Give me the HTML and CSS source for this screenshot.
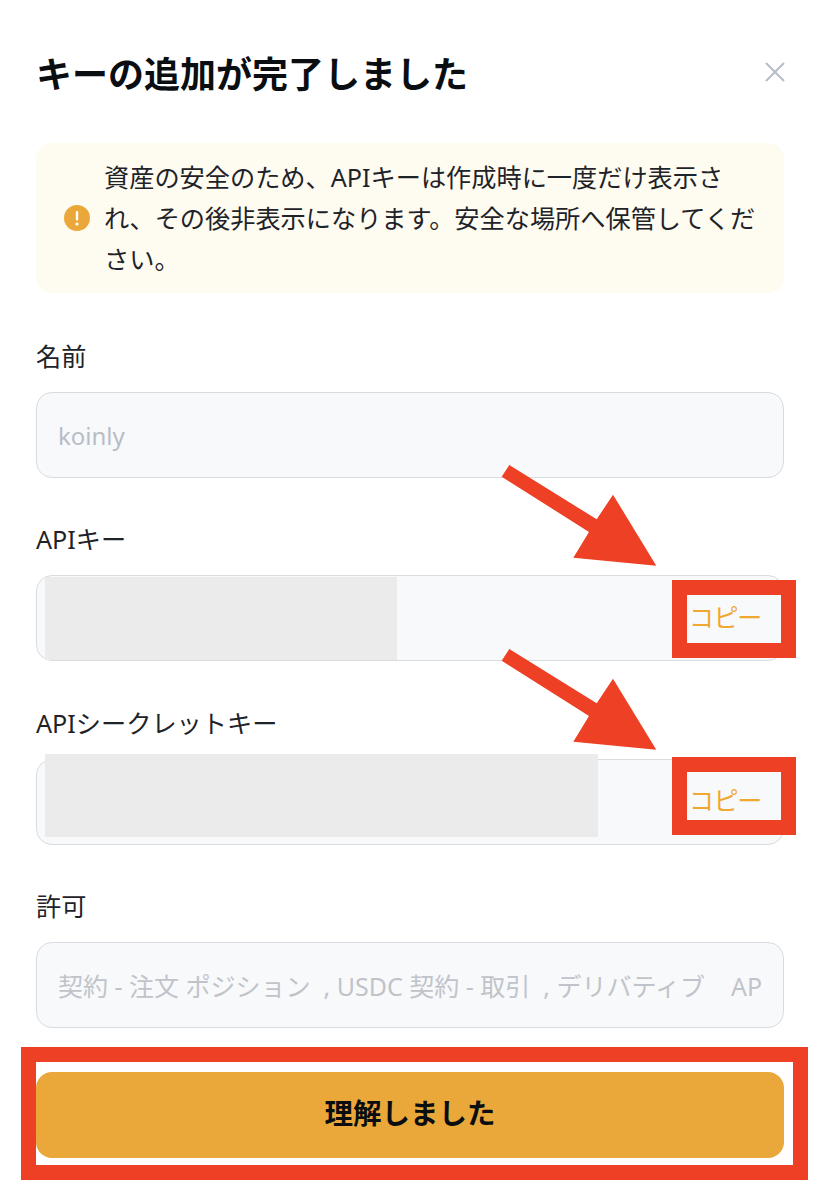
FILE: index.html
```html
<!DOCTYPE html>
<html lang="ja">
<head>
<meta charset="utf-8">
<title>キーの追加が完了しました</title>
<link rel="stylesheet" href="styles.css">
</head>
<body>
<main class="modal">
  <header class="head">
    <h1 class="title">キーの追加が完了しました</h1>
    <svg class="close" viewBox="0 0 20 20" width="20" height="20" aria-hidden="true"><path d="M1 1 L19 19 M19 1 L1 19"/></svg>
  </header>
  <section class="notice">
    <svg class="notice-icon" viewBox="0 0 26 26" width="26" height="26" aria-hidden="true"><circle cx="13" cy="13" r="13" fill="#eba83a"/><rect x="11.8" y="6" width="2.4" height="9.5" rx="1" fill="#fff"/><circle cx="13" cy="19" r="1.6" fill="#fff"/></svg>
    <p class="notice-text">資産の安全のため、APIキーは作成時に一度だけ表示され、その後非表示になります。安全な場所へ保管してください。</p>
  </section>
  <div class="field first">
    <label class="label">名前</label>
    <div class="box"><span class="value latin">koinly</span></div>
  </div>
  <div class="field">
    <label class="label">APIキー</label>
    <div class="box"><span class="value"></span><span class="copy">コピー</span></div>
  </div>
  <div class="field">
    <label class="label">APIシークレットキー</label>
    <div class="box"><span class="value"></span><span class="copy">コピー</span></div>
  </div>
  <div class="field">
    <label class="label">許可</label>
    <div class="box"><span class="value perms">契約 - 注文 ポジション&nbsp; , USDC 契約 - 取引&nbsp; , デリバティブ&nbsp; &nbsp; API</span></div>
  </div>
  <button class="confirm" type="button">理解しました</button>
</main>

<div class="mask mask-key"></div>
<div class="mask mask-secret"></div>
<div class="frame frame-key"></div>
<div class="frame frame-secret"></div>
<div class="frame frame-button"></div>
<svg class="arrows" viewBox="0 0 834 1190" width="834" height="1190" aria-hidden="true">
  <polygon points="501.7,476.7 509.3,465 596.7,519.3 613,494.7 656.3,565.7 573.3,557.7 589,532"/>
  <polygon points="501.7,660.7 509.3,649 596.7,703.3 613,678.7 656.3,749.7 573.3,741.7 589,716"/>
</svg>
</body>
</html>
```
FILE: styles.css
```css
* { box-sizing: border-box; }
html, body { margin: 0; padding: 0; background: #fff; }
body {
  position: relative;
  width: 834px;
  height: 1190px;
  overflow: hidden;
  font-family: "Noto Sans", "Noto Sans CJK JP", sans-serif;
  color: #1e2329;
}
.modal { display: flex; flex-direction: column; padding: 47px 50px 0 36px; }
.head { display: flex; justify-content: space-between; align-items: flex-start; height: 50px; margin-bottom: 46px; }
.title { margin: 0; font-size: 36px; line-height: 50px; font-weight: 700; color: #0b0e11; font-family: "Noto Sans CJK JP", sans-serif; }
.close { margin-top: 15px; margin-right: -1px; fill: none; stroke: #b7bdc6; stroke-width: 2; }
.notice {
  display: flex;
  align-items: center;
  gap: 14px;
  height: 150px;
  padding: 0 24px 0 28px;
  background: #fefbf0;
  border-radius: 16px;
}
.notice-icon { flex: none; }
.notice-text { margin: 0; font-size: 25.2px; line-height: 41px; color: #1e2329; }
.field { margin-top: 44.4px; }
.field.first { margin-top: 46px; }
.label { display: block; font-size: 25.2px; line-height: 35px; margin-bottom: 18px; color: #1e2329; }
.box {
  display: flex;
  align-items: center;
  justify-content: space-between;
  height: 86px;
  padding: 0 21px;
  background: #f8f9fb;
  border: 1px solid #d8dce1;
  border-radius: 16px;
  font-size: 25px;
  overflow: hidden;
}
.value { color: #b7bdc6; white-space: nowrap; overflow: hidden; flex: 1; min-width: 0; }
.latin { font-size: 24px; }
.perms { color: #c0c4ca; }
.copy { color: #f0a830; white-space: nowrap; flex: none; font-feature-settings: "palt" 1; padding-bottom: 5px; }
.confirm {
  margin-top: 43.8px;
  height: 86px;
  padding: 0 0 5px;
  border: 0;
  border-radius: 16px;
  background: #eba83a;
  color: #0b0e11;
  font: 700 28.5px/40px "Noto Sans CJK JP", sans-serif;
}
.mask { position: absolute; left: 45px; background: #ebebeb; }
.mask-key { top: 577px; width: 352px; height: 83px; }
.mask-secret { top: 754px; width: 553px; height: 83px; }
.frame { position: absolute; border: 15px solid #ee4025; }
.frame-key { left: 672px; top: 580px; width: 124px; height: 78px; }
.frame-secret { left: 672px; top: 757px; width: 124px; height: 78px; }
.frame-button { left: 21px; top: 1047px; width: 787px; height: 133px; }
.arrows { position: absolute; left: 0; top: 0; fill: #ee4025; }
```
